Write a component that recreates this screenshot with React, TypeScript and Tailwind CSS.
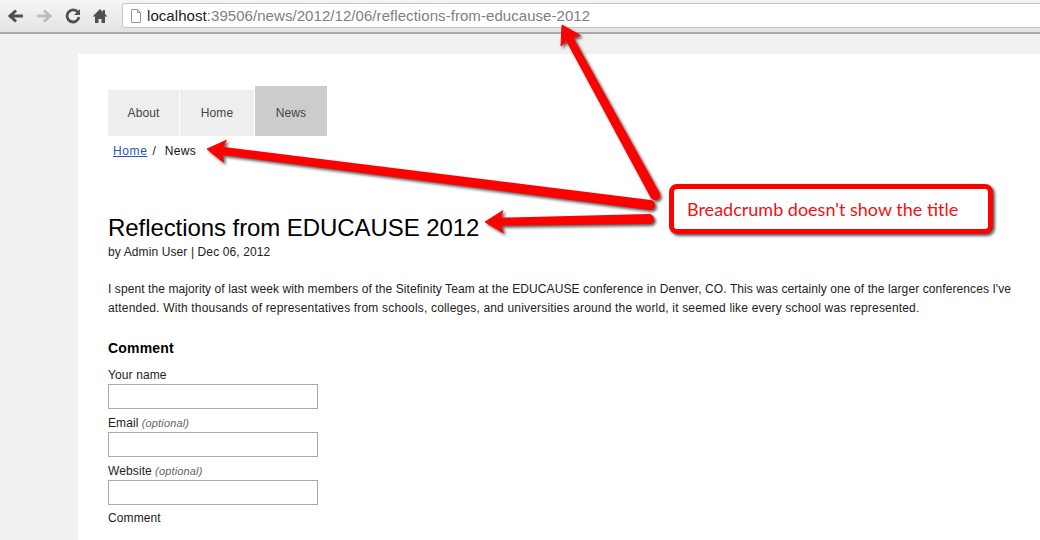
import React from "react";

const Arrow = ({ x1, y1, x2, y2, w = 10, hw = 11, hl = 18 }: { x1: number; y1: number; x2: number; y2: number; w?: number; hw?: number; hl?: number }) => {
  const dx = x2 - x1, dy = y2 - y1;
  const len = Math.hypot(dx, dy);
  const ux = dx / len, uy = dy / len, nx = -uy, ny = ux;
  const bx = x2 - ux * hl, by = y2 - uy * hl;
  const nbx = x2 - ux * hl * 0.8, nby = y2 - uy * hl * 0.8;
  const head = `${x2},${y2} ${bx + nx * hw},${by + ny * hw} ${nbx},${nby} ${bx - nx * hw},${by - ny * hw}`;
  const r = w / 2, r2 = w * 0.4;
  const shaft = `M${nbx + nx * r2},${nby + ny * r2} L${x1 + nx * r},${y1 + ny * r} A${r},${r} 0 0 1 ${x1 - nx * r},${y1 - ny * r} L${nbx - nx * r2},${nby - ny * r2} Z`;
  return (
    <g>
      <path d={shaft} fill="#ff0000" />
      <polygon points={head} fill="#ff0000" stroke="#ff0000" strokeWidth={1} strokeLinejoin="round" />
    </g>
  );
};

const Field = ({ label, optional }: { label: string; optional?: boolean }) => (
  <div>
    <div className="h-[18px] text-[12px] leading-[20px] tracking-[0.11px] text-[#222]">
      {label}
      {optional && <i className="text-[11px] tracking-[0.15px] text-[#666]"> (optional)</i>}
    </div>
    <div className="mt-[1px] h-[25px] w-[210px] border border-[#a9a9a9] bg-white" />
  </div>
);

export default function App() {
  return (
    <div className="relative h-[540px] w-[1040px] overflow-hidden bg-[#f1f1f1] font-['Liberation_Sans',Arial,sans-serif]">
      <div className="flex h-[34px] items-start border-b-2 border-[#a8a8a8] bg-gradient-to-b from-[#f6f6f6] to-[#e4e4e4] pl-[6px] pt-[3px]">
        <div className="flex h-[25px] w-[116px] shrink-0 items-center">
          <svg width="18" height="16" viewBox="0 0 18 16" className="ml-[1px]"><path d="M16 8H4M9 2.500 3 8l6 5.500" fill="none" stroke="#505050" strokeWidth="3" /></svg>
          <svg width="18" height="16" viewBox="0 0 18 16" className="ml-[11px]"><path d="M1 8h12M8 2.500 14 8l-6 5.500" fill="none" stroke="#bdbdbd" strokeWidth="3" /></svg>
          <svg width="16" height="16" viewBox="0 0 16 16" className="ml-[11px]"><path d="M13 4.500A6 6 0 1 0 14 9" fill="none" stroke="#505050" strokeWidth="2.800" /><path d="M15 1v6H9z" fill="#505050" /></svg>
          <svg width="16" height="16" viewBox="0 0 16 16" className="ml-[11px]"><path d="M8 1 0.500 8.500H3V15h3.500v-4h3v4H13V8.500h2.500L13 6V2h-2v2z" fill="#505050" /></svg>
        </div>
        <div className="flex h-[25px] w-[930px] shrink-0 items-center rounded-[3px] border border-[#c4c4c4] bg-white pl-[7px] pt-[1px] text-[15px] tracking-[0.06px]">
          <svg width="12" height="14" viewBox="0 0 12 14"><path d="M1.500.500h6l3 3v10h-9zM7.500.500v3h3" fill="#fff" stroke="#9a9a9a" /></svg>
          <span className="ml-[5px] text-[#222]">localhost</span>
          <span className="text-[#808080]">:39506/news/2012/12/06/reflections-from-educause-2012</span>
        </div>
      </div>

      <div className="ml-[78px] mt-[20px] h-[486px] bg-white pl-[30px] pt-[32px] text-[#222]">
        <div className="flex h-[50px] items-end gap-[1px] text-[12px] tracking-[0.11px] text-[#444]">
          <div className="flex h-[46px] w-[71px] items-center justify-center bg-[#eeeeee]">About</div>
          <div className="flex h-[46px] w-[74px] items-center justify-center bg-[#eeeeee]">Home</div>
          <div className="flex h-[50px] w-[72px] items-center justify-center bg-[#cccccc] pt-[4px]">News</div>
        </div>
        <div className="ml-[5px] mt-[6px] h-[18px] text-[12px] leading-[18px]">
          <a className="tracking-[0.6px] text-[#2a50c8] underline">Home</a>
          <span className="ml-[5px]">/</span>
          <span className="ml-[9px] tracking-[0.3px] text-[#111]">News</span>
        </div>
        <h1 className="mt-[53px] text-[24px] leading-[30px] tracking-[-0.07px] text-black">Reflections from EDUCAUSE 2012</h1>
        <div className="text-[12px] leading-[18px] tracking-[0.11px]">by Admin User | Dec 06, 2012</div>
        <p className="mt-[19px] w-[920px] whitespace-nowrap text-[12px] leading-[19px]">
          <span className="block tracking-[0.09px]">I spent the majority of last week with members of the Sitefinity Team at the EDUCAUSE conference in Denver, CO. This was certainly one of the larger conferences I've</span>
          <span className="block tracking-[0.175px]">attended. With thousands of representatives from schools, colleges, and universities around the world, it seemed like every school was represented.</span>
        </p>
        <div className="mt-[20px] text-[14px] font-bold leading-[20px] tracking-[0.2px] text-black">Comment</div>
        <div className="mt-[7px] flex flex-col gap-[4px]">
          <Field label="Your name" />
          <Field label="Email" optional />
          <Field label="Website" optional />
          <div className="h-[18px] text-[12px] leading-[18px] tracking-[0.11px]">Comment</div>
        </div>
      </div>

      <svg width="1040" height="540" className="absolute left-0 top-0 [filter:drop-shadow(2px_2px_1.5px_rgba(0,0,0,0.65))]">
        <Arrow x1={655} y1={195} x2={562} y2={25} />
        <Arrow x1={650} y1={205} x2={207} y2={149} />
        <Arrow x1={649} y1={219} x2={485} y2={222} />
      </svg>

      <div className="absolute left-[669px] top-[184px] flex h-[50px] w-[324px] items-center rounded-[8px] border-[5px] border-[#ff0000] bg-white pl-[13px] font-['Lato',sans-serif] text-[18px] text-[#ee1111] shadow-[2px_2px_3px_rgba(0,0,0,0.65)]">
        Breadcrumb doesn't show the title
      </div>
    </div>
  );
}
